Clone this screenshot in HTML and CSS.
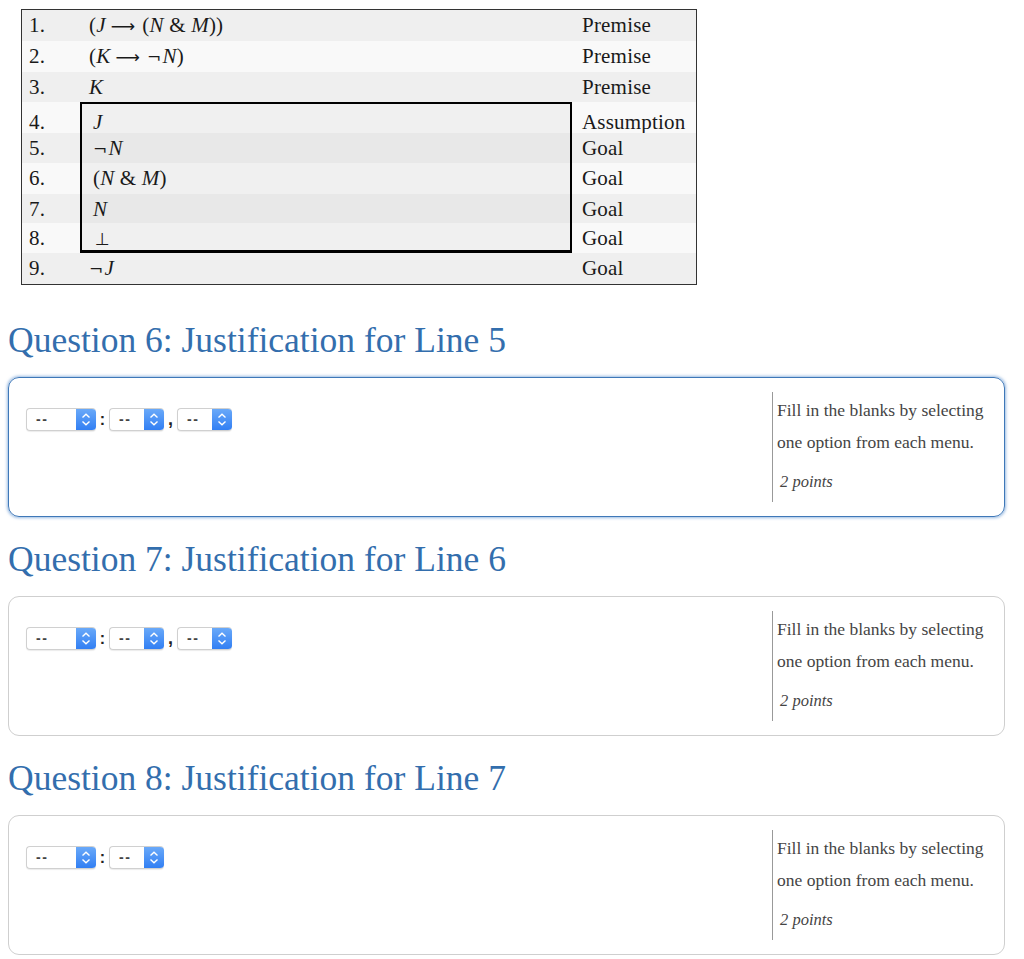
FILE: index.html
```html
<!DOCTYPE html>
<html>
<head>
<meta charset="utf-8">
<link rel="stylesheet" href="styles.css">
</head>
<body>
<div class="proof">
  <div class="c n a">1.</div><div class="c f a">(<i>J</i><span class="to">⟶</span>(<i>N</i> &amp; <i>M</i>))</div><div class="c j a">Premise</div>
  <div class="c n b">2.</div><div class="c f b">(<i>K</i><span class="to">⟶</span><span class="neg">¬</span><i>N</i>)</div><div class="c j b">Premise</div>
  <div class="c n a">3.</div><div class="c f a"><i>K</i></div><div class="c j a">Premise</div>
  <div class="c n b first">4.</div>
  <div class="box">
    <div class="bc ba bfirst"><i>J</i></div>
    <div class="bc bb"><span class="neg">¬</span><i>N</i></div>
    <div class="bc ba">(<i>N</i> &amp; <i>M</i>)</div>
    <div class="bc bb"><i>N</i></div>
    <div class="bc ba"><span class="bot">⊥</span></div>
  </div>
  <div class="c j b first">Assumption</div>
  <div class="c n a">5.</div><div class="c j a">Goal</div>
  <div class="c n b">6.</div><div class="c j b">Goal</div>
  <div class="c n a">7.</div><div class="c j a">Goal</div>
  <div class="c n b">8.</div><div class="c j b">Goal</div>
  <div class="c n a">9.</div><div class="c f a"><span class="neg">¬</span><i>J</i></div><div class="c j a">Goal</div>
</div>

<h2 class="qtitle">Question 6: Justification for Line 5</h2>
<div class="qbox focused">
  <div class="answer">
    <span class="sel w70"><span class="val">--</span><span class="btn"><svg viewBox="0 0 20 23" width="20" height="23"><path d="M6.5 9.5 L10 6.2 L13.5 9.5 M6.5 13.5 L10 16.8 L13.5 13.5" fill="none" stroke="#fff" stroke-width="1.4"/></svg></span></span><span class="sep">:</span><span class="sel w55"><span class="val">--</span><span class="btn"><svg viewBox="0 0 20 23" width="20" height="23"><path d="M6.5 9.5 L10 6.2 L13.5 9.5 M6.5 13.5 L10 16.8 L13.5 13.5" fill="none" stroke="#fff" stroke-width="1.4"/></svg></span></span><span class="sep comma">,</span><span class="sel w55"><span class="val">--</span><span class="btn"><svg viewBox="0 0 20 23" width="20" height="23"><path d="M6.5 9.5 L10 6.2 L13.5 9.5 M6.5 13.5 L10 16.8 L13.5 13.5" fill="none" stroke="#fff" stroke-width="1.4"/></svg></span></span>
  </div>
  <div class="hint">
    <p class="hint-text">Fill in the blanks by selecting one option from each menu.</p>
    <p class="points">2 points</p>
  </div>
</div>

<h2 class="qtitle">Question 7: Justification for Line 6</h2>
<div class="qbox">
  <div class="answer">
    <span class="sel w70"><span class="val">--</span><span class="btn"><svg viewBox="0 0 20 23" width="20" height="23"><path d="M6.5 9.5 L10 6.2 L13.5 9.5 M6.5 13.5 L10 16.8 L13.5 13.5" fill="none" stroke="#fff" stroke-width="1.4"/></svg></span></span><span class="sep">:</span><span class="sel w55"><span class="val">--</span><span class="btn"><svg viewBox="0 0 20 23" width="20" height="23"><path d="M6.5 9.5 L10 6.2 L13.5 9.5 M6.5 13.5 L10 16.8 L13.5 13.5" fill="none" stroke="#fff" stroke-width="1.4"/></svg></span></span><span class="sep comma">,</span><span class="sel w55"><span class="val">--</span><span class="btn"><svg viewBox="0 0 20 23" width="20" height="23"><path d="M6.5 9.5 L10 6.2 L13.5 9.5 M6.5 13.5 L10 16.8 L13.5 13.5" fill="none" stroke="#fff" stroke-width="1.4"/></svg></span></span>
  </div>
  <div class="hint">
    <p class="hint-text">Fill in the blanks by selecting one option from each menu.</p>
    <p class="points">2 points</p>
  </div>
</div>

<h2 class="qtitle">Question 8: Justification for Line 7</h2>
<div class="qbox">
  <div class="answer">
    <span class="sel w70"><span class="val">--</span><span class="btn"><svg viewBox="0 0 20 23" width="20" height="23"><path d="M6.5 9.5 L10 6.2 L13.5 9.5 M6.5 13.5 L10 16.8 L13.5 13.5" fill="none" stroke="#fff" stroke-width="1.4"/></svg></span></span><span class="sep">:</span><span class="sel w55"><span class="val">--</span><span class="btn"><svg viewBox="0 0 20 23" width="20" height="23"><path d="M6.5 9.5 L10 6.2 L13.5 9.5 M6.5 13.5 L10 16.8 L13.5 13.5" fill="none" stroke="#fff" stroke-width="1.4"/></svg></span></span>
  </div>
  <div class="hint">
    <p class="hint-text">Fill in the blanks by selecting one option from each menu.</p>
    <p class="points">2 points</p>
  </div>
</div>
</body>
</html>
```

FILE: styles.css
```css
html, body {
  margin: 0;
  padding: 0;
  background: #fff;
}
body {
  padding: 9px 20px 0 8px;
  font-family: "Liberation Serif", "DejaVu Serif", serif;
  color: #222;
}

/* proof table */
.proof {
  display: grid;
  grid-template-columns: 58px 492px 1fr;
  grid-template-rows: 31px 31px 30px 31px 30px 31px 29px 30px 31px;
  width: 674px;
  margin-left: 13px;
  border: 1px solid #333;
  font-size: 21px;
  color: #1a1a1a;
}
.c {
  line-height: 30px;
  white-space: nowrap;
  letter-spacing: 0.2px;
}
.a { background: #efefef; }
.b { background: #f9f9f9; }
.n { padding-left: 7px; }
.f { padding-left: 9px; }
.j { padding-left: 10px; }
.first {
  line-height: 22px;
  padding-top: 9px;
}
.n.first, .n.first ~ .n { grid-column: 1; }
.j.first, .j.first ~ .j { grid-column: 3; }
.box {
  grid-column: 2;
  grid-row: 4 / 9;
  border: 2px solid #000;
  border-bottom-width: 3px;
  display: grid;
  grid-template-rows: 29px 30px 31px 29px minmax(0, 1fr);
  overflow: hidden;
}
.bc {
  padding-left: 11px;
  line-height: 30px;
  white-space: nowrap;
  letter-spacing: 0.2px;
}
.bfirst {
  line-height: 22px;
  padding-top: 7px;
}
.ba { background: #f0f0f0; }
.bb { background: #e8e8e8; }
.proof i { font-style: italic; }
.to {
  font-family: "DejaVu Sans", sans-serif;
  font-size: 17px;
  margin: 0 7px 0 5px;
}
.neg {
  font-family: "DejaVu Serif", serif;
  font-size: 17px;
  margin-right: 1px;
}
.bot {
  font-family: "DejaVu Sans", sans-serif;
  font-size: 17px;
  margin-left: 2px;
}

/* headings */
.qtitle {
  margin: 35px 0 17px;
  font-family: "Liberation Serif", serif;
  font-weight: normal;
  font-size: 35.5px;
  line-height: 40px;
  color: #336ead;
}
.qbox + .qtitle { margin-top: 22px; }

/* question box */
.qbox {
  display: flex;
  justify-content: space-between;
  align-items: flex-start;
  width: 962px;
  padding: 14px 16px 14px 17px;
  border: 1px solid #cfcfcf;
  border-radius: 11px;
}
.qbox.focused {
  border-color: #3f78b8;
  box-shadow: 0 0 3px 1px rgba(70, 130, 200, 0.55);
}
.answer {
  padding-top: 16px;
  display: flex;
  align-items: center;
}
.sel {
  display: inline-flex;
  height: 23px;
  border: 1px solid #d0d0d0;
  border-right: none;
  border-radius: 4px;
  box-sizing: border-box;
  background: #fff;
  box-shadow: 0 1px 1px rgba(0,0,0,0.08);
  overflow: hidden;
}
.w70 { width: 70px; }
.w55 { width: 55px; }
.val {
  flex: 1;
  padding-left: 9px;
  font-family: "Liberation Sans", Arial, sans-serif;
  font-size: 14px;
  font-weight: bold;
  line-height: 21px;
  color: #444;
  letter-spacing: 1.5px;
}
.btn {
  width: 20px;
  height: 23px;
  margin-top: -1px;
  background: linear-gradient(#6cabf9, #2f7df3);
  border-radius: 0 4px 4px 0;
}
.btn svg { display: block; }
.sep {
  width: 13px;
  text-align: center;
  font-family: "Liberation Sans", Arial, sans-serif;
  font-weight: bold;
  font-size: 16px;
  color: #222;
}
.comma { font-size: 18px; }

.hint {
  width: 211px;
  border-left: 1px solid #999;
  padding: 2px 0 4px 4px;
  font-family: "Liberation Serif", serif;
  color: #444;
}
.hint p { margin: 0; }
.hint-text {
  font-size: 17.5px;
  line-height: 32px;
}
.points {
  margin-top: 8px !important;
  padding-left: 3px;
  font-style: italic;
  font-size: 16.5px;
  line-height: 32px;
}
```
